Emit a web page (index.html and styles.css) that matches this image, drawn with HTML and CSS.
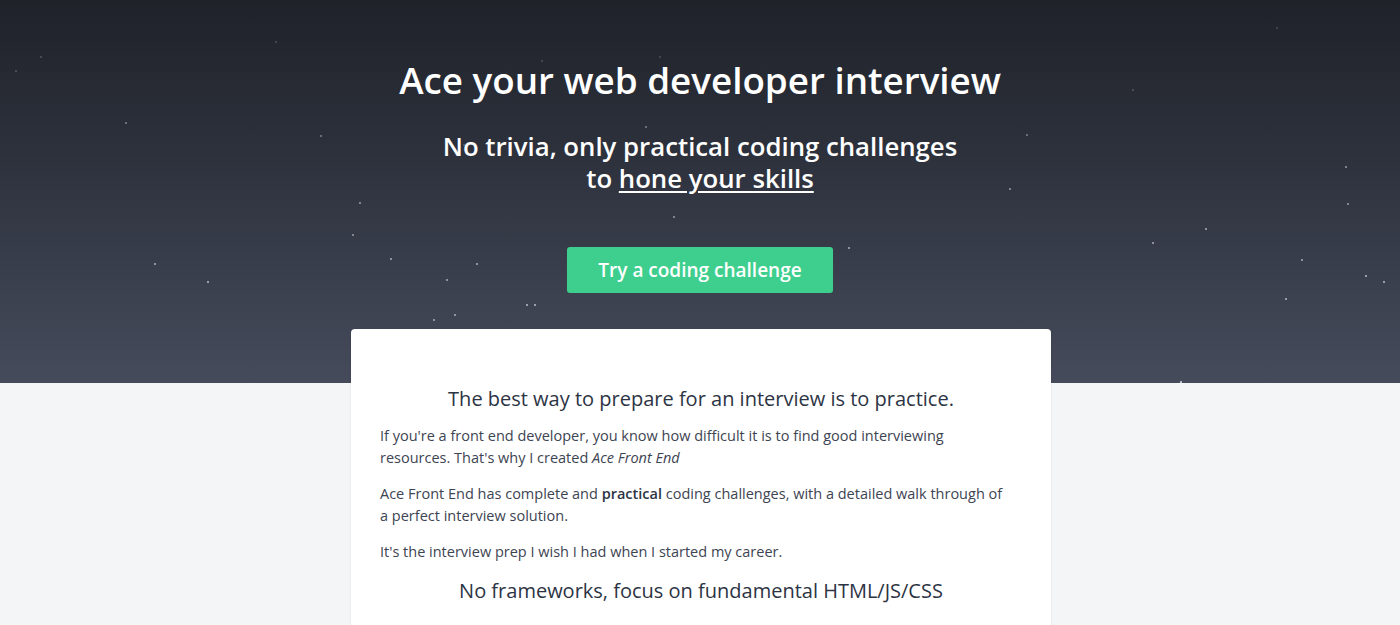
FILE: index.html
```html
<!DOCTYPE html>
<html lang="en">
<head>
<meta charset="utf-8">
<title>Ace Front End</title>
<link rel="stylesheet" href="styles.css">
</head>
<body>
<header class="hero">
  <svg class="stars" width="1400" height="383" viewBox="0 0 1400 383" aria-hidden="true">
    <g fill="#c9ccd6">
      <circle cx="16" cy="71" r="0.8" opacity=".5"/>
      <circle cx="41" cy="57" r="0.8" opacity=".5"/>
      <circle cx="126" cy="123" r="0.9" opacity=".6"/>
      <circle cx="276" cy="42" r="0.8" opacity=".4"/>
      <circle cx="321" cy="136" r="0.9" opacity=".6"/>
      <circle cx="360" cy="203" r="1" opacity=".7"/>
      <circle cx="353" cy="235" r="1" opacity=".7"/>
      <circle cx="391" cy="259" r="1" opacity=".8"/>
      <circle cx="155" cy="264" r="1" opacity=".8"/>
      <circle cx="208" cy="282" r="1" opacity=".9"/>
      <circle cx="447" cy="280" r="1" opacity=".8"/>
      <circle cx="477" cy="264" r="1" opacity=".8"/>
      <circle cx="434" cy="320" r="1" opacity=".8"/>
      <circle cx="455" cy="315" r="1" opacity=".8"/>
      <circle cx="527" cy="305" r="1" opacity=".9"/>
      <circle cx="535" cy="305" r="1" opacity=".9"/>
      <circle cx="542" cy="61" r="0.8" opacity=".4"/>
      <circle cx="660" cy="57" r="0.8" opacity=".4"/>
      <circle cx="464" cy="145" r="0.8" opacity=".5"/>
      <circle cx="646" cy="127" r="0.9" opacity=".6"/>
      <circle cx="674" cy="217" r="1" opacity=".7"/>
      <circle cx="720" cy="183" r="1" opacity=".7"/>
      <circle cx="765" cy="250" r="1" opacity=".8"/>
      <circle cx="811" cy="252" r="1" opacity=".8"/>
      <circle cx="849" cy="248" r="1" opacity=".8"/>
      <circle cx="1000" cy="74" r="0.9" opacity=".6"/>
      <circle cx="1133" cy="90" r="0.8" opacity=".5"/>
      <circle cx="1027" cy="135" r="0.9" opacity=".6"/>
      <circle cx="1010" cy="189" r="1" opacity=".7"/>
      <circle cx="1206" cy="229" r="1" opacity=".8"/>
      <circle cx="1153" cy="243" r="1" opacity=".8"/>
      <circle cx="1346" cy="167" r="1" opacity=".7"/>
      <circle cx="1348" cy="204" r="1" opacity=".7"/>
      <circle cx="1302" cy="260" r="1" opacity=".8"/>
      <circle cx="1366" cy="276" r="1" opacity=".9"/>
      <circle cx="1384" cy="282" r="1" opacity=".9"/>
      <circle cx="1286" cy="299" r="1" opacity=".9"/>
      <circle cx="1181" cy="382" r="1.1" opacity="1"/>
      <circle cx="1277" cy="28" r="0.8" opacity=".4"/>
    </g>
  </svg>
  <div class="hero-inner">
    <h1 class="hero-title">Ace your web developer interview</h1>
    <p class="hero-sub">No trivia, only practical coding challenges<br>to <u class="hl">hone your skills</u></p>
    <a class="cta" href="#">Try a coding challenge</a>
  </div>
</header>
<main class="content">
  <section class="card">
    <h2 class="card-heading">The best way to prepare for an interview is to practice.</h2>
    <p class="card-text">If you're a front end developer, you know how difficult it is to find good interviewing resources. That's why I created <em>Ace Front End</em></p>
    <p class="card-text">Ace Front End has complete and <strong>practical</strong> coding challenges, with a detailed walk through of a perfect interview solution.</p>
    <p class="card-text">It's the interview prep I wish I had when I started my career.</p>
    <h2 class="card-heading card-heading-2">No frameworks, focus on fundamental HTML/JS/CSS</h2>
  </section>
</main>
</body>
</html>
```

FILE: styles.css
```css
* { box-sizing: border-box; }
html, body { margin: 0; padding: 0; }
body {
  background: #f4f5f7;
  font-family: "Open Sans", "Liberation Sans", sans-serif;
  color: #3d4452;
  overflow: hidden;
}
.hero {
  position: relative;
  height: 383px;
  background: linear-gradient(to bottom, #1f2229 0%, #2d313c 40%, #464b5c 100%);
  color: #fff;
}
.stars {
  position: absolute;
  left: 0;
  top: 0;
}
.hero-inner {
  position: relative;
  display: flex;
  flex-direction: column;
  align-items: center;
  padding-top: 56px;
}
.hero-title {
  margin: 0;
  font-size: 36.8px;
  line-height: 48px;
  font-weight: 600;
  letter-spacing: 0;
}
.hero-sub {
  margin: 26px 0 0;
  font-size: 25.75px;
  line-height: 32px;
  font-weight: 600;
  text-align: center;
}
.hl { text-decoration-thickness: 2px; text-underline-offset: 3px; }
.cta {
  margin-top: 53px;
  width: 266px;
  height: 46px;
  display: flex;
  align-items: center;
  justify-content: center;
  background: #3ecf8e;
  color: #fff;
  text-decoration: none;
  font-size: 19px;
  font-weight: 600;
  border-radius: 3px;
}
.content {
  display: flex;
  justify-content: center;
  margin-top: -54px;
  padding-left: 2px;
  position: relative;
}
.card {
  width: 700px;
  background: #fff;
  border-radius: 4px;
  box-shadow: 0 1px 3px rgba(0,0,0,0.08);
  padding: 56px 41px 40px 29px;
}
.card-heading {
  margin: 0 0 12px;
  padding-left: 12px;
  text-align: center;
  font-size: 20px;
  line-height: 28px;
  font-weight: 500;
  color: #2c3444;
}
.card-heading-2 { margin-top: 13px; }
.card-text {
  margin: 0 0 14px;
  font-size: 14.5px;
  line-height: 22px;
}
.card-text strong { font-weight: 600; color: #2c3444; }
```
